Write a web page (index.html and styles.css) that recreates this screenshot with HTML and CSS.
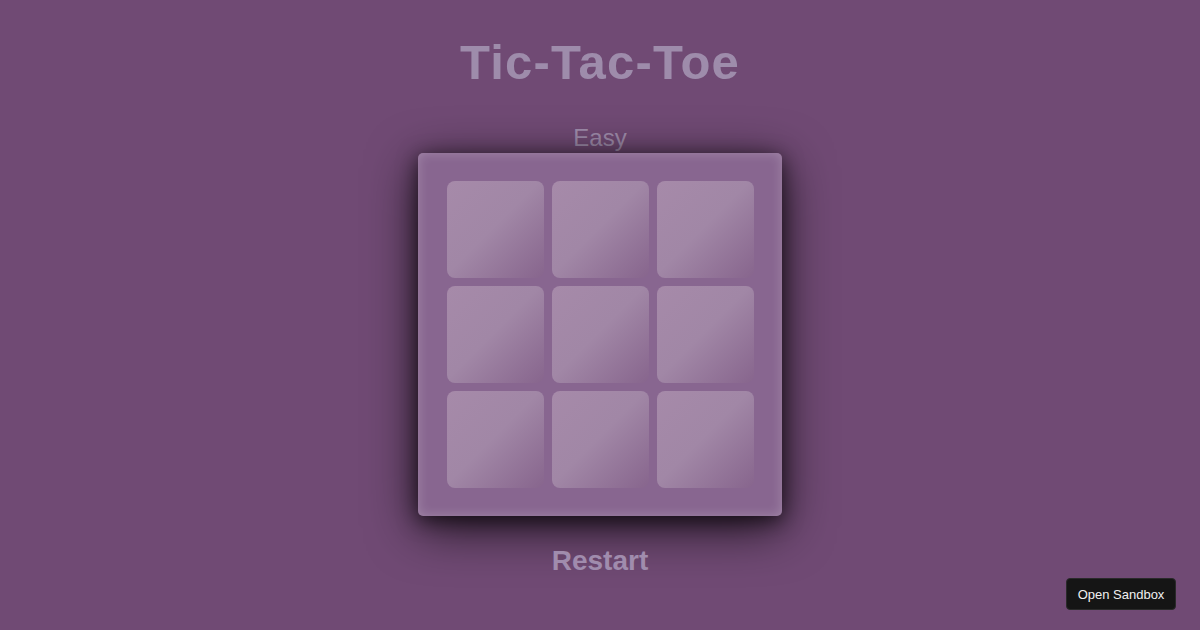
FILE: index.html
```html
<!DOCTYPE html>
<html>
<head>
<meta charset="utf-8">
<link rel="stylesheet" href="styles.css">
</head>
<body>
<main class="app">
  <h1 class="title">Tic-Tac-Toe</h1>
  <div class="level">Easy</div>
  <div class="board">
    <div class="cell"></div><div class="cell"></div><div class="cell"></div>
    <div class="cell"></div><div class="cell"></div><div class="cell"></div>
    <div class="cell"></div><div class="cell"></div><div class="cell"></div>
  </div>
  <div class="restart">Restart</div>
</main>
<a class="sandbox">Open Sandbox</a>
</body>
</html>
```
FILE: styles.css
```css
html, body {
  margin: 0;
  padding: 0;
  height: 100%;
}
body {
  background: #704a74;
  font-family: "Liberation Sans", Arial, sans-serif;
  overflow: hidden;
  position: relative;
}
.app {
  display: flex;
  flex-direction: column;
  align-items: center;
}
.title {
  margin: 38px 0 0;
  font-size: 49px;
  line-height: 49px;
  letter-spacing: 1.2px;
  font-weight: bold;
  color: #9e8cab;
}
.level {
  margin-top: 39px;
  font-size: 24px;
  line-height: 24px;
  color: #a08dac;
}
.board {
  margin-top: 3px;
  box-sizing: border-box;
  width: 364px;
  height: 363px;
  padding: 28px 29px;
  display: grid;
  grid-template-columns: repeat(3, 97px);
  grid-template-rows: repeat(3, 97px);
  gap: 8px;
  background: #886690;
  border-radius: 5px;
  box-shadow: inset 0 0 12px rgba(255,255,255,0.22), 0 12px 50px rgba(0,0,0,0.75), 0 4px 20px rgba(0,0,0,0.6);
}
.cell {
  border-radius: 8px;
  background: linear-gradient(135deg, #a68aa9 0%, #a187a6 48%, #87658d 100%);
}
.restart {
  margin-top: 31px;
  font-size: 28px;
  line-height: 28px;
  font-weight: bold;
  color: #a08cad;
}
.sandbox {
  position: absolute;
  right: 24px;
  bottom: 20px;
  width: 110px;
  height: 32px;
  box-sizing: border-box;
  display: flex;
  align-items: center;
  justify-content: center;
  background: #151515;
  border: 1px solid #2a2a2a;
  border-radius: 4px;
  color: #f0f0f0;
  font-size: 13px;
  font-family: "Liberation Sans", Arial, sans-serif;
}
```
